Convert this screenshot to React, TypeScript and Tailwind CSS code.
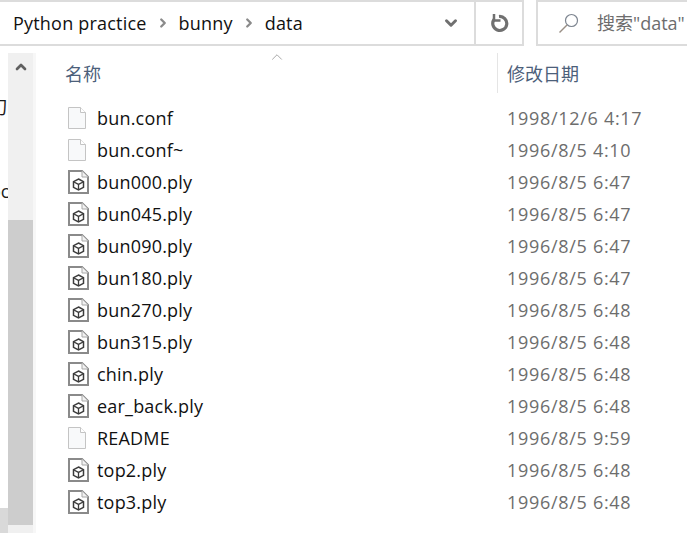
import { ChevronDown, ChevronRight, ChevronUp } from "lucide-react";

const font = "[font-family:'Open_Sans','Noto_Sans_CJK_SC',sans-serif]";

const files = [
  { name: "bun.conf", date: "1998/12/6 4:17", model: false },
  { name: "bun.conf~", date: "1996/8/5 4:10", model: false },
  { name: "bun000.ply", date: "1996/8/5 6:47", model: true },
  { name: "bun045.ply", date: "1996/8/5 6:47", model: true },
  { name: "bun090.ply", date: "1996/8/5 6:47", model: true },
  { name: "bun180.ply", date: "1996/8/5 6:47", model: true },
  { name: "bun270.ply", date: "1996/8/5 6:48", model: true },
  { name: "bun315.ply", date: "1996/8/5 6:48", model: true },
  { name: "chin.ply", date: "1996/8/5 6:48", model: true },
  { name: "ear_back.ply", date: "1996/8/5 6:48", model: true },
  { name: "README", date: "1996/8/5 9:59", model: false },
  { name: "top2.ply", date: "1996/8/5 6:48", model: true },
  { name: "top3.ply", date: "1996/8/5 6:48", model: true },
];

const FileIcon = ({ model }: { model: boolean }) =>
  model ? (
    <svg width="21" height="24" viewBox="0 0 21 24" fill="none">
      <path d="M1 1h13l6 6v16H1z" fill="#fff" stroke="#8a8a8a" strokeWidth="2" />
      <path d="M14 1v6h6" fill="#f2f2f2" stroke="#a8a8a8" />
      <path d="M10.500 9l5 2.700v5.600l-5 2.700-5-2.700v-5.600z" stroke="#3c3c3c" strokeWidth="1.500" />
      <path d="M5.500 11.700l5 2.700 5-2.700M10.500 14.400V20" stroke="#3c3c3c" strokeWidth="1.300" />
    </svg>
  ) : (
    <svg width="18" height="22" viewBox="0 0 18 22" fill="none">
      <path d="M.5.5h12l5 5v16H.5z" fill="#f8f9fa" stroke="#c4c4c4" />
      <path d="M12.500.5v5h5" fill="#fff" stroke="#c4c4c4" />
    </svg>
  );

const App = () => {
  return (
    <div className={`flex h-[533px] w-[687px] flex-col overflow-hidden bg-white ${font}`}>
      <div className="flex h-[46px] shrink-0">
        <div className="flex w-[474px] items-center border-y-2 border-[#dcdcdc] pl-[13px] text-[18px] tracking-[0.2px] text-[#111]">
          <span>Python practice</span>
          <ChevronRight className="mx-[9px] text-[#8a8a8a]" size={14} strokeWidth={4} />
          <span>bunny</span>
          <ChevronRight className="mx-[9px] text-[#8a8a8a]" size={14} strokeWidth={4} />
          <span>data</span>
          <ChevronDown className="ml-auto mr-[14px] text-[#707070]" size={18} strokeWidth={4} />
        </div>
        <div className="flex w-[50px] items-center justify-center border-2 border-[#dcdcdc] pl-[3px]">
          <svg width="20" height="20" viewBox="0 0 20 20" fill="none" stroke="#707070" strokeWidth="3.200">
            <path d="M8 3.500a7 7 0 1 1-5 3" />
            <path d="M3 1v6.500h6.500" strokeWidth="2.500" />
          </svg>
        </div>
        <div className="ml-[12px] flex flex-1 items-center border-y-2 border-l-2 border-[#dcdcdc] pl-[20px] text-[18px] text-[#6d6d6d]">
          <svg className="mr-[18px]" width="21" height="21" viewBox="0 0 21 21" fill="none">
            <circle cx="13.500" cy="7.500" r="6" stroke="#7d8590" strokeWidth="1.200" />
            <path d="M9 12L1.500 19.500" stroke="#9a8f86" strokeWidth="1.500" />
          </svg>
          <span className="whitespace-nowrap">搜索"data"</span>
        </div>
      </div>

      <div className="flex min-h-0 flex-1 pt-[7px]">
        <div className="flex w-[8px] shrink-0 flex-col overflow-hidden text-[18px] text-[#1a1a1a]">
          <span className="mt-[42px] -ml-[10px] h-[24px] w-[18px] whitespace-nowrap leading-[24px]">刃</span>
          <span className="mt-[60px] -ml-[10px] h-[24px] w-[18px] whitespace-nowrap leading-[24px]">oc</span>
          <div className="mt-auto h-[25px] bg-[#d9d9d9]" />
        </div>
        <div className="flex w-[25px] shrink-0 flex-col bg-[#f0f0f0]">
          <div className="flex h-[27px] items-center justify-center">
            <ChevronUp className="text-[#606060]" size={16} strokeWidth={4} />
          </div>
          <div className="mt-[140px] mb-[8px] flex-1 bg-[#cdcdcd]" />
        </div>
        <div className="w-[3px] shrink-0 bg-[#f7f7f7]" />

        <div className="relative flex-1 pl-[29px]">
          <ChevronUp className="absolute top-[-5px] left-[232px] text-[#8c8c8c]" size={18} strokeWidth={1} />
          <div className="flex h-[40px] text-[18px] text-[#4c607a]">
            <div className="flex w-[433px] items-center border-r border-[#e5e5e5] pt-[2px]">名称</div>
            <div className="flex items-center pl-[9px] pt-[2px] whitespace-nowrap">修改日期</div>
          </div>
          <div className="pt-[9px]">
            {files.map((file) => (
              <div key={file.name} className="flex h-[32px] items-center text-[18px]">
                <div className="flex w-[32px] shrink-0 pl-[3px]">
                  <FileIcon model={file.model} />
                </div>
                <span className="w-[410px] shrink-0 tracking-[0.2px] text-[#111]">{file.name}</span>
                <span className="whitespace-nowrap tracking-[0.7px] text-[#6d6d6d]">{file.date}</span>
              </div>
            ))}
          </div>
        </div>
      </div>
    </div>
  );
};

export default App;
